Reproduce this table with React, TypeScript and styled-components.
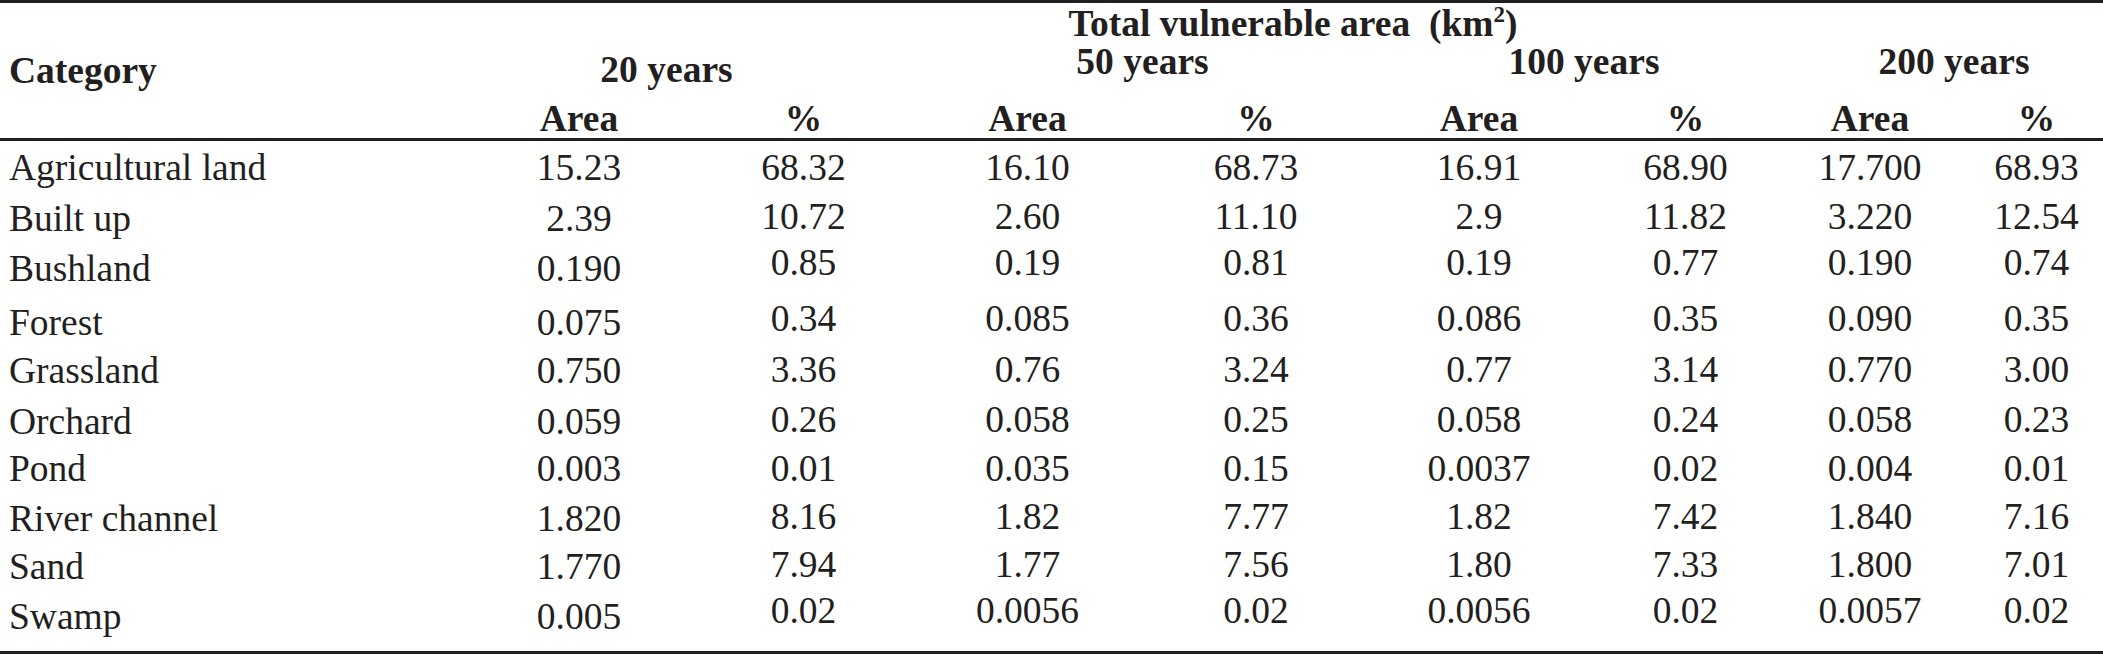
import React from "react";
import styled, { createGlobalStyle } from "styled-components";

const GlobalStyle = createGlobalStyle`
  html, body {
    margin: 0;
    padding: 0;
    background: #ffffff;
  }
  body {
    font-family: "Liberation Serif", "Times New Roman", serif;
    color: #231f20;
  }
`;

const COLS = "465px 228px 221px 227px 230px 216px 197px 172px 147px";

const Table = styled.div`
  width: 2103px;
  border-top: 3px solid #231f20;
  border-bottom: 3px solid #231f20;
  font-size: 37.5px;
  line-height: 40px;
`;

const Head = styled.div`
  display: grid;
  grid-template-columns: ${COLS};
  grid-template-rows: 37px 54px 44px;
  border-bottom: 3px solid #231f20;
  font-weight: 700;
`;

const HeadCell = styled.div<{
  $col: string;
  $row: number;
  $v?: "start" | "end";
  $left?: boolean;
  $mt?: number;
  $mb?: number;
  $pl?: number;
  $pr?: number;
  $lh?: number;
}>`
  grid-column: ${(p) => p.$col};
  grid-row: ${(p) => p.$row};
  align-self: ${(p) => p.$v ?? "start"};
  text-align: ${(p) => (p.$left ? "left" : "center")};
  margin-top: ${(p) => p.$mt ?? 0}px;
  margin-bottom: ${(p) => p.$mb ?? 0}px;
  padding-left: ${(p) => p.$pl ?? 0}px;
  padding-right: ${(p) => p.$pr ?? 0}px;
  line-height: ${(p) => p.$lh ?? 40}px;
  white-space: nowrap;

  sup {
    font-size: 23px;
    line-height: 0;
    vertical-align: 14px;
  }
`;

const Body = styled.div`
  padding-top: 7px;
`;

const Row = styled.div<{ $h: number }>`
  display: grid;
  grid-template-columns: ${COLS};
  height: ${(p) => p.$h}px;
`;

const Cell = styled.div<{ $left?: boolean; $lift?: number; $pl?: number }>`
  text-align: ${(p) => (p.$left ? "left" : "center")};
  padding-left: ${(p) => p.$pl ?? 0}px;
  margin-top: ${(p) => -(p.$lift ?? 0)}px;
  white-space: nowrap;
`;

type DataRow = { name: string; values: string[]; h: number; lift: number };

const rows: DataRow[] = [
  { name: "Agricultural land", values: ["15.23", "68.32", "16.10", "68.73", "16.91", "68.90", "17.700", "68.93"], h: 51, lift: 0 },
  { name: "Built up", values: ["2.39", "10.72", "2.60", "11.10", "2.9", "11.82", "3.220", "12.54"], h: 50, lift: 2 },
  { name: "Bushland", values: ["0.190", "0.85", "0.19", "0.81", "0.19", "0.77", "0.190", "0.74"], h: 54, lift: 6 },
  { name: "Forest", values: ["0.075", "0.34", "0.085", "0.36", "0.086", "0.35", "0.090", "0.35"], h: 48, lift: 4 },
  { name: "Grassland", values: ["0.750", "3.36", "0.76", "3.24", "0.77", "3.14", "0.770", "3.00"], h: 51, lift: 1 },
  { name: "Orchard", values: ["0.059", "0.26", "0.058", "0.25", "0.058", "0.24", "0.058", "0.23"], h: 47, lift: 2 },
  { name: "Pond", values: ["0.003", "0.01", "0.035", "0.15", "0.0037", "0.02", "0.004", "0.01"], h: 50, lift: 0 },
  { name: "River channel", values: ["1.820", "8.16", "1.82", "7.77", "1.82", "7.42", "1.840", "7.16"], h: 48, lift: 2 },
  { name: "Sand", values: ["1.770", "7.94", "1.77", "7.56", "1.80", "7.33", "1.800", "7.01"], h: 50, lift: 2 },
  { name: "Swamp", values: ["0.005", "0.02", "0.0056", "0.02", "0.0056", "0.02", "0.0057", "0.02"], h: 54, lift: 6 },
];

const periods = [
  { label: "20 years", col: "2 / 4", v: "end" as const, pl: 0, pr: 46, mt: 0, mb: 4 },
  { label: "50 years", col: "4 / 6", v: "start" as const, pl: 0, pr: 0, mt: 2, mb: 0 },
  { label: "100 years", col: "6 / 8", v: "start" as const, pl: 13, pr: 0, mt: 2, mb: 0 },
  { label: "200 years", col: "8 / 10", v: "start" as const, pl: 21, pr: 0, mt: 2, mb: 0 },
];

export default function App() {
  return (
    <>
      <GlobalStyle />
      <Table>
        <Head>
          <HeadCell $col="1" $row={2} $v="end" $left $pl={9} $mb={3}>
            Category
          </HeadCell>
          <HeadCell $col="2 / 10" $row={1} $mt={5} $lh={32} $pl={18}>
            Total vulnerable area&nbsp;&nbsp;(km<sup>2</sup>)
          </HeadCell>
          {periods.map((p) => (
            <HeadCell
              key={p.label}
              $col={p.col}
              $row={2}
              $v={p.v}
              $pl={p.pl}
              $pr={p.pr}
              $mt={p.mt}
              $mb={p.mb}
            >
              {p.label}
            </HeadCell>
          ))}
          {Array.from({ length: 8 }, (_, i) => (
            <HeadCell key={i} $col={String(i + 2)} $row={3} $mt={5} $pl={i === 7 ? 14 : 0}>
              {i % 2 === 0 ? "Area" : "%"}
            </HeadCell>
          ))}
        </Head>
        <Body>
          {rows.map((r) => (
            <Row key={r.name} $h={r.h}>
              <Cell $left $pl={9}>
                {r.name}
              </Cell>
              {r.values.map((v, i) => (
                <Cell key={i} $lift={i === 0 ? 0 : r.lift} $pl={i === 7 ? 14 : 0}>
                  {v}
                </Cell>
              ))}
            </Row>
          ))}
        </Body>
      </Table>
    </>
  );
}
